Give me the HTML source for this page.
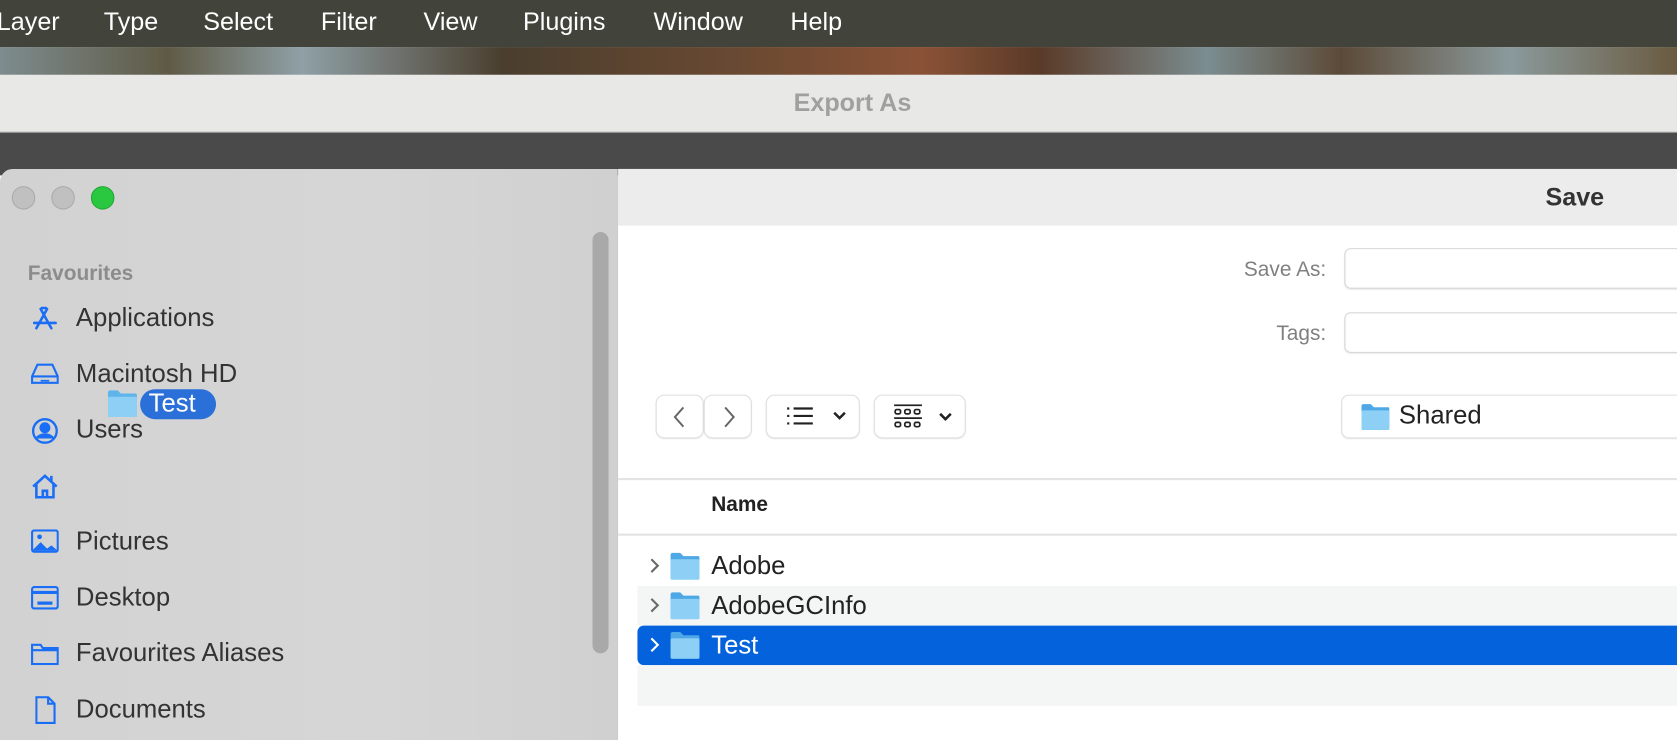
<!DOCTYPE html>
<html><head><meta charset="utf-8"><style>
*{margin:0;padding:0;box-sizing:border-box}
html,body{width:1677px;height:740px;overflow:hidden;background:#fff;font-family:"Liberation Sans",sans-serif}
#w{position:absolute;left:0;top:0;width:1568px;height:692px;transform:scale(1.06952,1.06936);transform-origin:0 0}
.a{position:absolute;white-space:nowrap}
.menu{left:0;top:0;width:1568px;height:44px;background:#42443b}
.menu span{position:absolute;top:7px;color:#fff;font-size:23.5px}
.trees{left:0;top:44px;width:1568px;height:26px;background:linear-gradient(90deg,#7d8c8e 0%,#5f5a45 10%,#8fa0a6 18%,#4a3e2e 30%,#6c4a32 45%,#8a5236 55%,#5a3a28 62%,#7b8d90 72%,#5c4a38 80%,#8a9a9c 90%,#6a5a40 100%)}
.exp{left:0;top:70px;width:1568px;height:54px;background:#e8e8e6;border-bottom:1px solid #bbb}
.dark{left:0;top:124px;width:1568px;height:40px;background:#4a4a4a}
.side{left:0;top:158px;width:578px;height:534px;background:linear-gradient(90deg,#d2d2d2,#d6d6d6 60%,#d0d0d0);border-top-left-radius:12px;border-right:1px solid #c4c4c4}
.main{left:578px;top:158px;width:990px;height:534px;background:#fff}
.hdr{left:578px;top:158px;width:990px;height:53px;background:#ececec}
.tl{position:absolute;top:174px;width:22px;height:22px;border-radius:50%;background:#c0c0c0;border:1px solid #aaa}
.item{position:absolute;left:71px;font-size:24px;color:#333}
.ic{position:absolute;left:29px}
.lbl{position:absolute;font-size:19.5px;color:#808080;text-align:right;width:200px}
.inp{position:absolute;left:1257px;width:330px;height:38px;border:1px solid #d6d6d6;border-radius:6px;background:#fff;box-shadow:0 1px 1px rgba(0,0,0,.08)}
.btn{position:absolute;top:370px;height:39px;border-radius:7px;background:#fff;box-shadow:0 0 0 1px #ddd,0 1px 2px rgba(0,0,0,.15)}
.row{position:absolute;left:596px;width:990px;height:37px}
.rt{position:absolute;left:665px;font-size:24px;color:#222}
</style></head><body><div id="w">
<div class="a menu">
<span style="left:-3px">Layer</span><span style="left:97px">Type</span><span style="left:190px">Select</span><span style="left:300px">Filter</span><span style="left:396px">View</span><span style="left:489px">Plugins</span><span style="left:611px">Window</span><span style="left:739px">Help</span>
</div>
<div class="a trees"></div>
<div class="a exp"><span class="a" style="left:742px;top:13px;font-size:23.5px;font-weight:bold;color:#a0a0a0">Export As</span></div>
<div class="a dark"></div>
<div class="a main"></div>
<div class="a hdr"><span class="a" style="left:867px;top:13px;font-size:23.5px;font-weight:bold;color:#333">Save</span></div>
<div class="a side"></div>
<div class="tl" style="left:11px"></div><div class="tl" style="left:48px"></div><div class="tl" style="left:85px;background:#2ac840;border-color:#22a834"></div>
<div class="a" style="left:554px;top:217px;width:15px;height:394px;border-radius:8px;background:#a9a9a9"></div>
<div class="a" style="left:26px;top:245px;font-size:19.5px;font-weight:bold;color:#8c8c8c">Favourites</div>

<svg class="ic" style="top:286px" width="26" height="24" viewBox="0 0 26 24" fill="none" stroke="#1a6ef5" stroke-width="2.4" stroke-linecap="round"><path d="M9 3l10 18M15 3L5 21M3 16h20M10 2h4"/></svg>
<div class="item" style="top:284px">Applications</div>
<svg class="ic" style="top:339px" width="26" height="22" viewBox="0 0 26 22" fill="none" stroke="#1a6ef5" stroke-width="2"><path d="M6 2h14l5 11v6H1v-6z M1 13h24"/><path d="M9 17h8" stroke-width="1.5"/></svg>
<div class="item" style="top:336px">Macintosh HD</div>
<svg class="ic" style="top:390px" width="26" height="26" viewBox="0 0 26 26" fill="none" stroke="#1a6ef5" stroke-width="2.2"><circle cx="13" cy="13" r="11"/><circle cx="13" cy="10" r="4" fill="#1a6ef5"/><path d="M5 20c4-5 12-5 16 0" fill="#1a6ef5"/></svg>
<div class="item" style="top:388px">Users</div>
<svg class="ic" style="top:442px" width="26" height="26" viewBox="0 0 26 26" fill="none" stroke="#1a6ef5" stroke-width="2.4"><path d="M2 13L13 3l11 10M5 11v12h16V11M11 23v-6h4v6" /><path d="M19 3v5"/></svg>
<svg class="ic" style="top:495px" width="26" height="22" viewBox="0 0 26 22"><rect x="1" y="1" width="24" height="20" rx="2" fill="none" stroke="#1a6ef5" stroke-width="2"/><path d="M1 20l8-8 6 6 4-3 6 5z" fill="#1a6ef5"/><circle cx="8" cy="7" r="2.2" fill="#1a6ef5"/></svg>
<div class="item" style="top:493px">Pictures</div>
<svg class="ic" style="top:548px" width="26" height="22" viewBox="0 0 26 22" fill="none" stroke="#1a6ef5" stroke-width="2"><rect x="1" y="1" width="24" height="20" rx="2"/><path d="M1 6h24M6 16h14" stroke-width="3"/></svg>
<div class="item" style="top:545px">Desktop</div>
<svg class="ic" style="top:600px" width="26" height="22" viewBox="0 0 26 22" fill="none" stroke="#1a6ef5" stroke-width="2"><path d="M1 3h8l2 3h14v15H1z M1 8h24"/></svg>
<div class="item" style="top:597px">Favourites Aliases</div>
<svg class="ic" style="top:651px;left:33px" width="20" height="26" viewBox="0 0 20 26" fill="none" stroke="#1a6ef5" stroke-width="2"><path d="M1 1h11l6 6v18H1z M12 1v6h6"/></svg>
<div class="item" style="top:650px">Documents</div>

<svg class="a" style="left:100px;top:364px" width="29" height="27" viewBox="0 0 29 27"><path d="M1 3q0-2 2-2h7l3 3h14q1 0 1 2v19q0 1-1 1H2q-1 0-1-1z" fill="#5fb4ea"/><rect x="1" y="7" width="27" height="19" rx="1.5" fill="#8ed0f5"/></svg>
<div class="a" style="left:131px;top:364px;width:71px;height:28px;border-radius:14px;background:#2b70d9;color:#fff;font-size:24px;padding-left:8px;line-height:28px">Test</div>

<div class="lbl" style="left:1040px;top:241px">Save As:</div>
<div class="inp" style="top:232px"></div>
<div class="lbl" style="left:1040px;top:301px">Tags:</div>
<div class="inp" style="top:292px"></div>

<div class="btn" style="left:614px;width:43px"><svg class="a" style="left:14px;top:9px" width="14" height="22" viewBox="0 0 14 22" fill="none" stroke="#666" stroke-width="1.8"><path d="M11 2L3 11l8 9"/></svg></div>
<div class="btn" style="left:659px;width:43px"><svg class="a" style="left:16px;top:9px" width="14" height="22" viewBox="0 0 14 22" fill="none" stroke="#666" stroke-width="1.8"><path d="M3 2l8 9-8 9"/></svg></div>
<div class="btn" style="left:717px;width:86px"><svg class="a" style="left:18px;top:9px" width="60" height="20" viewBox="0 0 60 20" fill="none" stroke="#222" stroke-width="2"><path d="M1 3h2M1 10h2M1 17h2M7 3h18M7 10h18M7 17h18"/><path d="M45 7l5 5 5-5" stroke-width="2.4"/></svg></div>
<div class="btn" style="left:818px;width:84px"><svg class="a" style="left:17px;top:8px" width="60" height="24" viewBox="0 0 60 24" fill="none" stroke="#222" stroke-width="1.6"><path d="M1 1h26"/><rect x="2" y="5" width="5" height="4" rx="1.5"/><rect x="11" y="5" width="5" height="4" rx="1.5"/><rect x="20" y="5" width="5" height="4" rx="1.5"/><path d="M1 13h26"/><rect x="2" y="17" width="5" height="4" rx="1.5"/><rect x="11" y="17" width="5" height="4" rx="1.5"/><rect x="20" y="17" width="5" height="4" rx="1.5"/><path d="M44 9l5 5 5-5" stroke-width="2.4"/></svg></div>
<div class="btn" style="left:1255px;width:330px;border-radius:6px"><svg class="a" style="left:17px;top:7px" width="28" height="26" viewBox="0 0 29 27"><path d="M1 3q0-2 2-2h7l3 3h14q1 0 1 2v19q0 1-1 1H2q-1 0-1-1z" fill="#4fa8e6"/><rect x="1" y="7" width="27" height="19" rx="1.5" fill="#8ed0f5"/></svg><span class="a" style="left:53px;top:5px;font-size:24px;color:#222">Shared</span></div>

<div class="a" style="left:578px;top:447px;width:990px;height:2px;background:#e3e3e3"></div>
<div class="a" style="left:665px;top:461px;font-size:19.5px;font-weight:bold;color:#222">Name</div>
<div class="a" style="left:578px;top:499px;width:990px;height:2px;background:#e3e3e3"></div>

<div class="row" style="top:511px"></div>
<div class="row" style="top:548px;background:#f4f5f5"></div>
<div class="row" style="top:585px;background:#0463dc;border-radius:6px 0 0 6px"></div>
<div class="row" style="top:622px;background:#f4f5f5;height:38px"></div>

<svg class="a" style="left:606px;top:521px" width="12" height="16" viewBox="0 0 12 16" fill="none" stroke="#6a6a6a" stroke-width="2"><path d="M3 2l6 6-6 6"/></svg>
<svg class="a" style="left:626px;top:516px" width="29" height="27" viewBox="0 0 29 27"><path d="M1 3q0-2 2-2h7l3 3h14q1 0 1 2v19q0 1-1 1H2q-1 0-1-1z" fill="#4fa8e6"/><rect x="1" y="7" width="27" height="19" rx="1.5" fill="#8ed0f5"/></svg>
<div class="rt" style="top:516px">Adobe</div>
<svg class="a" style="left:606px;top:558px" width="12" height="16" viewBox="0 0 12 16" fill="none" stroke="#6a6a6a" stroke-width="2"><path d="M3 2l6 6-6 6"/></svg>
<svg class="a" style="left:626px;top:553px" width="29" height="27" viewBox="0 0 29 27"><path d="M1 3q0-2 2-2h7l3 3h14q1 0 1 2v19q0 1-1 1H2q-1 0-1-1z" fill="#4fa8e6"/><rect x="1" y="7" width="27" height="19" rx="1.5" fill="#8ed0f5"/></svg>
<div class="rt" style="top:553px">AdobeGCInfo</div>
<svg class="a" style="left:606px;top:595px" width="12" height="16" viewBox="0 0 12 16" fill="none" stroke="#fff" stroke-width="2"><path d="M3 2l6 6-6 6"/></svg>
<svg class="a" style="left:626px;top:590px" width="29" height="27" viewBox="0 0 29 27"><path d="M1 3q0-2 2-2h7l3 3h14q1 0 1 2v19q0 1-1 1H2q-1 0-1-1z" fill="#4fa8e6"/><rect x="1" y="7" width="27" height="19" rx="1.5" fill="#8ed0f5"/></svg>
<div class="rt" style="top:590px;color:#fff">Test</div>
</div></body></html>
